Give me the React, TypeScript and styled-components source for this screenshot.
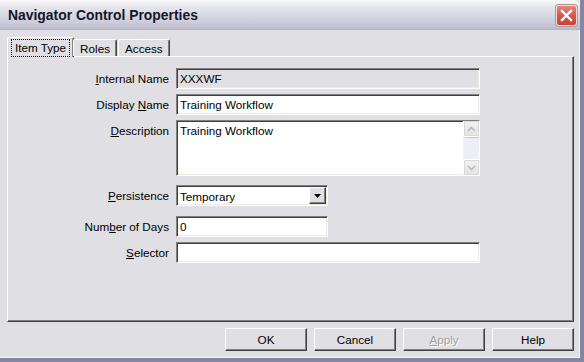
import React from 'react';
import styled, { createGlobalStyle } from 'styled-components';

const GlobalStyle = createGlobalStyle`
  html, body {
    margin: 0;
    padding: 0;
    background: #e0dfe3;
  }
  * {
    box-sizing: border-box;
  }
`;

const Window = styled.div`
  width: 584px;
  height: 362px;
  display: flex;
  flex-direction: column;
  overflow: hidden;
  background: #e0dfe3;
  border-right: 4px solid #8585a4;
  border-bottom: 4px solid #8585a4;
  box-shadow: inset -1px -1px 0 #f4f4f8;
  font-family: 'Liberation Sans', Arial, sans-serif;
  font-size: 11.7px;
  color: #000;
`;

const TitleBar = styled.div`
  height: 30px;
  flex-shrink: 0;
  display: flex;
  align-items: center;
  justify-content: space-between;
  padding: 0 3px 0 8px;
  background: linear-gradient(to bottom, #fbfbfd 0%, #e4e4ec 25%, #d4d4e0 60%, #c2c2d2 90%, #b4b4c6 100%);
  border-top-right-radius: 6px;
`;

const TitleText = styled.span`
  font-weight: bold;
  font-size: 13.9px;
  color: #16162a;
`;

const CloseButton = styled.div`
  width: 21px;
  height: 21px;
  border-radius: 3px;
  border: 1px solid #f2d8d6;
  background: linear-gradient(to bottom, #e5867c 0%, #d2574d 50%, #c4453c 100%);
  display: flex;
  align-items: center;
  justify-content: center;
  box-shadow: 0 0 0 1px #b39898;
`;

const Body = styled.div`
  flex: 1;
  display: flex;
  flex-direction: column;
  padding: 7px 4px 0 7px;
`;

const TabRow = styled.div`
  display: flex;
  align-items: flex-end;
  padding-left: 2px;
  height: 19px;
  position: relative;
  z-index: 1;
`;

const Tab = styled.div<{ $active?: boolean }>`
  height: ${p => (p.$active ? '20px' : '17px')};
  margin-left: ${p => (p.$active ? '-2px' : '0')};
  margin-right: ${p => (p.$active ? '-1px' : '1px')};
  margin-bottom: ${p => (p.$active ? '-1px' : '0')};
  padding: ${p => (p.$active ? '2px 4px 0 4px' : '1px 3px 0 3px')};
  background: #e0dfe3;
  border-top: 1px solid #fff;
  border-left: 1px solid #fff;
  border-right: 1px solid #404040;
  box-shadow: inset -1px 0 0 #808080;
  border-top-left-radius: 2px;
  border-top-right-radius: 2px;
  display: flex;
  align-items: flex-start;
`;

const TabLabel = styled.span<{ $focus?: boolean }>`
  padding: 1px 3px 2px;
  outline: ${p => (p.$focus ? '1px dotted #000' : 'none')};
  outline-offset: 0;
  line-height: 13px;
`;

const Panel = styled.div`
  height: 266px;
  width: 567px;
  border-top: 1px solid #fff;
  border-left: 1px solid #fff;
  border-right: 1px solid #404040;
  border-bottom: 1px solid #404040;
  box-shadow: inset -1px -1px 0 #808080;
  padding-top: 11px;
  display: flex;
  flex-direction: column;
`;

const Row = styled.div<{ $top?: number }>`
  display: grid;
  grid-template-columns: 161px auto;
  column-gap: 7px;
  align-items: start;
  margin-top: ${p => p.$top ?? 0}px;
`;

const Label = styled.label`
  text-align: right;
  padding-top: 4px;
  white-space: nowrap;
`;

const Key = styled.span`
  text-decoration: underline;
`;

const Field = styled.div<{ $width: number; $height?: number; $readOnly?: boolean }>`
  width: ${p => p.$width}px;
  height: ${p => p.$height ?? 21}px;
  background: ${p => (p.$readOnly ? '#e0dfe3' : '#fff')};
  border-top: 1px solid #808080;
  border-left: 1px solid #808080;
  border-right: 1px solid #fff;
  border-bottom: 1px solid #fff;
  box-shadow: inset 1px 1px 0 #404040, inset -1px -1px 0 #ece9e0;
  padding: 3px 3px 0 3px;
  white-space: nowrap;
  overflow: hidden;
  display: flex;
  align-items: flex-start;
  position: relative;
`;

const FieldText = styled.span<{ $top?: number }>`
  flex: 1;
  line-height: 14px;
  padding-top: ${p => p.$top ?? 0}px;
`;

const ScrollBar = styled.div`
  width: 17px;
  margin: -1px -1px -1px 0;
  align-self: stretch;
  background: #eeeef6;
  display: flex;
  flex-direction: column;
  justify-content: space-between;
`;

const ScrollButton = styled.div`
  width: 17px;
  height: 17px;
  background: linear-gradient(to bottom, #f3f3f3, #e3e3e3);
  border: 1px solid #fff;
  box-shadow: 0 0 0 1px #d8d8d8 inset, 1px 1px 0 #c8c8c8;
  border-radius: 2px;
  display: flex;
  align-items: center;
  justify-content: center;
`;

const DropButton = styled.div`
  width: 17px;
  height: 17px;
  margin: -1px -1px 0 0;
  background: #e0dfe3;
  border-top: 1px solid #fff;
  border-left: 1px solid #fff;
  border-right: 1px solid #404040;
  border-bottom: 1px solid #404040;
  box-shadow: inset -1px -1px 0 #808080;
  display: flex;
  align-items: center;
  justify-content: center;
`;

const ButtonBar = styled.div`
  display: flex;
  justify-content: flex-end;
  gap: 7px;
  padding: 6px 0 0;
  width: 567px;
`;

const Button = styled.div<{ $disabled?: boolean }>`
  width: 82px;
  height: 23px;
  display: flex;
  align-items: center;
  justify-content: center;
  background: #e0dfe3;
  border-top: 1px solid #fff;
  border-left: 1px solid #fff;
  border-right: 1px solid #404040;
  border-bottom: 1px solid #404040;
  box-shadow: inset -1px -1px 0 #808080;
  color: ${p => (p.$disabled ? '#a0a0a0' : '#000')};
  text-shadow: ${p => (p.$disabled ? '1px 1px 0 #fff' : 'none')};
`;

const Arrow: React.FC<{ down?: boolean; color?: string }> = ({ down, color = '#b8b8c0' }) => (
  <svg width="9" height="6" viewBox="0 0 9 6">
    <path
      d={down ? 'M1 1 L4.5 4.5 L8 1' : 'M1 5 L4.5 1.5 L8 5'}
      fill="none"
      stroke={color}
      strokeWidth="1.6"
    />
  </svg>
);

const App: React.FC = () => {
  return (
    <>
      <GlobalStyle />
      <Window>
        <TitleBar>
          <TitleText>Navigator Control Properties</TitleText>
          <CloseButton>
            <svg width="13" height="13" viewBox="0 0 13 13">
              <path d="M2 2 L11 11 M11 2 L2 11" stroke="#fff" strokeWidth="2.4" strokeLinecap="square" />
            </svg>
          </CloseButton>
        </TitleBar>
        <Body>
          <TabRow>
            <Tab $active>
              <TabLabel $focus>Item Type</TabLabel>
            </Tab>
            <Tab>
              <TabLabel>Roles</TabLabel>
            </Tab>
            <Tab>
              <TabLabel>Access</TabLabel>
            </Tab>
          </TabRow>
          <Panel>
            <Row>
              <Label><Key>I</Key>nternal Name</Label>
              <Field $width={304} $readOnly>
                <FieldText>XXXWF</FieldText>
              </Field>
            </Row>
            <Row $top={5}>
              <Label>Display <Key>N</Key>ame</Label>
              <Field $width={304}>
                <FieldText>Training Workflow</FieldText>
              </Field>
            </Row>
            <Row $top={5}>
              <Label><Key>D</Key>escription</Label>
              <Field $width={304} $height={56} style={{ paddingRight: 0, paddingTop: 0, paddingBottom: 0 }}>
                <FieldText $top={3}>Training Workflow</FieldText>
                <ScrollBar>
                  <ScrollButton><Arrow /></ScrollButton>
                  <ScrollButton><Arrow down /></ScrollButton>
                </ScrollBar>
              </Field>
            </Row>
            <Row $top={9}>
              <Label><Key>P</Key>ersistence</Label>
              <Field $width={152} style={{ paddingTop: 2, paddingRight: 2 }}>
                <FieldText $top={2}>Temporary</FieldText>
                <DropButton>
                  <svg width="7" height="4" viewBox="0 0 7 4">
                    <path d="M0 0 H7 L3.5 4 Z" fill="#000" />
                  </svg>
                </DropButton>
              </Field>
            </Row>
            <Row $top={10}>
              <Label>Num<Key>b</Key>er of Days</Label>
              <Field $width={152}>
                <FieldText>0</FieldText>
              </Field>
            </Row>
            <Row $top={5}>
              <Label><Key>S</Key>elector</Label>
              <Field $width={304}>
                <FieldText></FieldText>
              </Field>
            </Row>
          </Panel>
          <ButtonBar>
            <Button>OK</Button>
            <Button>Cancel</Button>
            <Button $disabled><span><Key>A</Key>pply</span></Button>
            <Button>Help</Button>
          </ButtonBar>
        </Body>
      </Window>
    </>
  );
};

export default App;
